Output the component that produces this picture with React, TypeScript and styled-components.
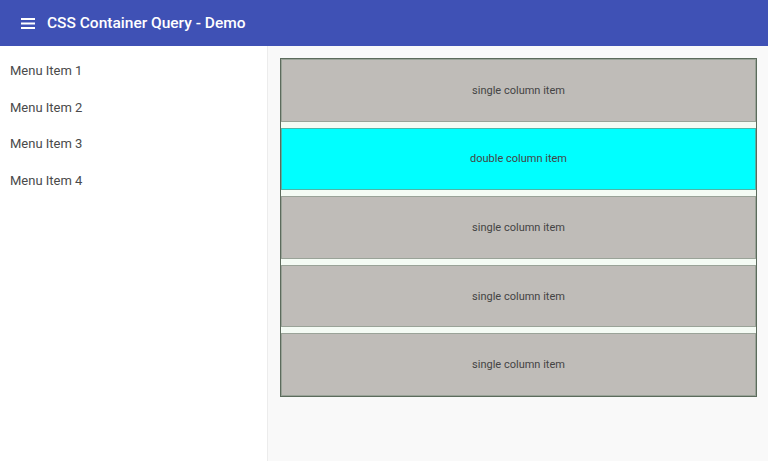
import React from 'react';
import styled, { createGlobalStyle } from 'styled-components';

const items = [
  { label: 'single column item', double: false },
  { label: 'double column item', double: true },
  { label: 'single column item', double: false },
  { label: 'single column item', double: false },
  { label: 'single column item', double: false },
];

const menu = ['Menu Item 1', 'Menu Item 2', 'Menu Item 3', 'Menu Item 4'];

export default function App() {
  return (
    <>
      <GlobalStyle />
      <Page>
        <Header>
          <MenuButton aria-label="menu">
            <svg width="14" height="11" viewBox="0 0 14 11">
              <rect x="0" y="0" width="14" height="2" fill="#fff" />
              <rect x="0" y="4.5" width="14" height="2" fill="#fff" />
              <rect x="0" y="9" width="14" height="2" fill="#fff" />
            </svg>
          </MenuButton>
          <Title>CSS Container Query - Demo</Title>
        </Header>
        <Body>
          <Sidebar>
            {menu.map((m) => (
              <MenuItem key={m}>{m}</MenuItem>
            ))}
          </Sidebar>
          <Main>
            <Grid>
              {items.map((it, i) => (
                <Item key={i} $double={it.double}>
                  {it.label}
                </Item>
              ))}
            </Grid>
          </Main>
        </Body>
      </Page>
    </>
  );
}

// Styled components

const GlobalStyle = createGlobalStyle`
  html, body {
    margin: 0;
    padding: 0;
    height: 100%;
  }
  body {
    font-family: Roboto, "Liberation Sans", sans-serif;
  }
  #root {
    height: 100%;
  }
`;

const Page = styled.div`
  display: flex;
  flex-direction: column;
  height: 100vh;
`;

const Header = styled.header`
  height: 46px;
  flex-shrink: 0;
  background-color: #3f51b5;
  display: flex;
  align-items: center;
  padding-left: 21px;
  gap: 12px;
  color: white;
`;

const MenuButton = styled.div`
  display: flex;
  align-items: center;
  padding-top: 1px;
`;

const Title = styled.h1`
  margin: 0;
  font-size: 15.5px;
  font-weight: 500;
`;

const Body = styled.div`
  flex: 1;
  display: flex;
  min-height: 0;
`;

const Sidebar = styled.nav`
  width: 267px;
  flex-shrink: 0;
  background: #fff;
  border-right: 1px solid #ececec;
  padding-top: 15px;
  display: flex;
  flex-direction: column;
`;

const MenuItem = styled.div`
  font-size: 13px;
  color: #4a4a4a;
  padding-left: 10px;
  height: 36.6px;
  line-height: 20px;
`;

const Main = styled.main`
  flex: 1;
  background: #f9f9f9;
  padding: 12px 11px 12px 12px;
`;

const Grid = styled.div`
  border: 1px solid #5c6b5c;
  background: #f4fbf4;
  display: grid;
  grid-template-columns: 1fr;
  gap: 6px;
`;

const Item = styled.div<{ $double: boolean }>`
  height: 62.6px;
  box-sizing: border-box;
  background: ${(p) => (p.$double ? '#00ffff' : '#bfbcb8')};
  border: 1px solid ${(p) => (p.$double ? '#4fb5a8' : '#9aa398')};
  display: flex;
  align-items: center;
  justify-content: center;
  font-size: 11px;
  color: #444;
`;
